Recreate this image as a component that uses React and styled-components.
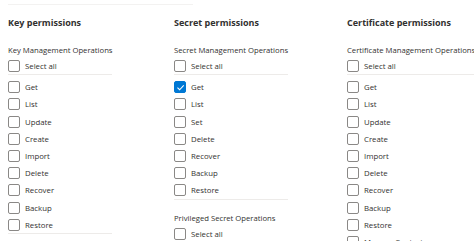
import React from 'react'
import styled, { createGlobalStyle } from 'styled-components'

const GlobalStyle = createGlobalStyle`
    body {
        margin: 0;
        background: #ffffff;
        font-family: 'Open Sans', 'Noto Sans', sans-serif;
        color: #323130;
    }
`

const Page = styled.div`
    position: relative;
    width: 474px;
    height: 241px;
    overflow: hidden;
    padding: 4px 0 0 8px;
    box-sizing: border-box;
`

const TopRule = styled.div`
    width: 185px;
    height: 1px;
    background: #f3f2f1;
    margin-bottom: 9px;
`

const Columns = styled.div`
    display: grid;
    grid-template-columns: 166px 173px 1fr;
`

const Column = styled.div`
    display: flex;
    flex-direction: column;
    min-width: 0;
`

const Title = styled.div`
    font-size: 9px;
    font-weight: 700;
    line-height: 18px;
    white-space: nowrap;
`

const Section = styled.div`
    display: flex;
    flex-direction: column;
    margin-top: ${p => p.$top}px;
`

const SubTitle = styled.div`
    font-size: 7.7px;
    line-height: 12px;
    white-space: nowrap;
    margin-bottom: 1px;
`

const Divider = styled.div`
    width: ${p => p.$width}px;
    height: 1px;
    background: #edebe9;
`

const List = styled.div`
    display: flex;
    flex-direction: column;
    padding-top: 3.5px;
`

const Row = styled.label`
    display: flex;
    align-items: center;
    gap: 5px;
    height: 17.2px;
    font-size: 7.8px;
    white-space: nowrap;
`

const Box = styled.span`
    width: 12px;
    height: 12px;
    box-sizing: border-box;
    border-radius: 2px;
    border: 1px solid ${p => (p.$checked ? '#0078d4' : '#8a8886')};
    background: ${p => (p.$checked ? '#0078d4' : '#ffffff')};
    display: flex;
    align-items: center;
    justify-content: center;
    flex-shrink: 0;
`

const Check = () => (
    <svg width="9" height="9" viewBox="0 0 10 10">
        <path d="M1.6 5.2 L4 7.5 L8.6 2.6" fill="none" stroke="#fff" strokeWidth="1.2" />
    </svg>
)

const CheckRow = ({ label, checked }) => (
    <Row>
        <Box $checked={checked}>{checked && <Check />}</Box>
        {label}
    </Row>
)

const keyOps = ['Get', 'List', 'Update', 'Create', 'Import', 'Delete', 'Recover', 'Backup', 'Restore']
const secretOps = ['Get', 'List', 'Set', 'Delete', 'Recover', 'Backup', 'Restore']
const certOps = [...keyOps, 'Manage Contacts']

const OpsSection = ({ heading, items, checked = [], width, top = 12, closed = true }) => (
    <Section $top={top}>
        <SubTitle>{heading}</SubTitle>
        <CheckRow label="Select all" />
        <Divider $width={width} />
        {items && (
            <List>
                {items.map(item => (
                    <CheckRow key={item} label={item} checked={checked.includes(item)} />
                ))}
            </List>
        )}
        {items && closed && <Divider $width={width} />}
    </Section>
)

const App = () => (
    <Page>
        <GlobalStyle />
        <TopRule />
        <Columns>
            <Column>
                <Title>Key permissions</Title>
                <OpsSection heading="Key Management Operations" items={keyOps} width={104} />
            </Column>
            <Column>
                <Title>Secret permissions</Title>
                <OpsSection heading="Secret Management Operations" items={secretOps} checked={['Get']} width={114} />
                <OpsSection heading="Privileged Secret Operations" width={114} />
            </Column>
            <Column>
                <Title>Certificate permissions</Title>
                <OpsSection heading="Certificate Management Operations" items={certOps} width={140} closed={false} />
            </Column>
        </Columns>
    </Page>
)

export default App
